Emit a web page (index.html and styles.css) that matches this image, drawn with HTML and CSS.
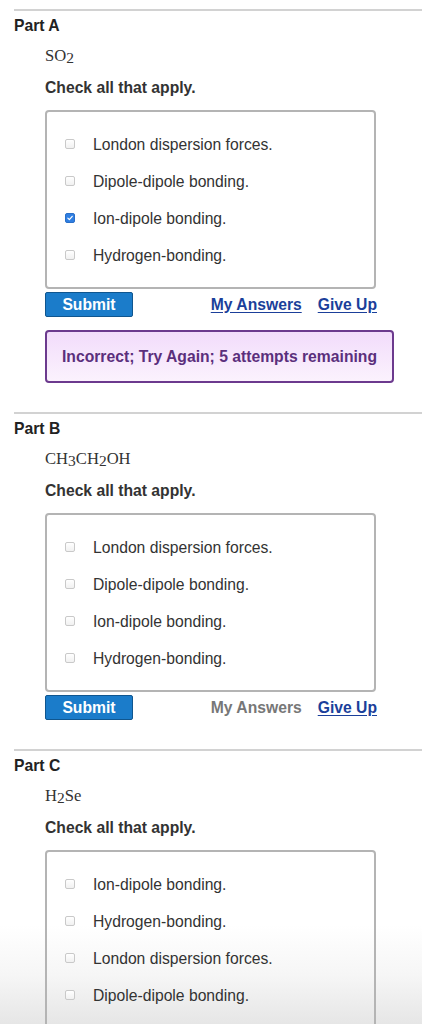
FILE: index.html
```html
<!DOCTYPE html>
<html>
<head>
<meta charset="utf-8">
<link rel="stylesheet" href="styles.css">
</head>
<body>
<div class="page">
  <section class="part">
    <h3 class="part-title">Part A</h3>
    <div class="formula">SO<span class="sub">2</span></div>
    <p class="instr">Check all that apply.</p>
    <div class="choices">
      <div class="choice"><span class="cb"></span><span>London dispersion forces.</span></div>
      <div class="choice"><span class="cb"></span><span>Dipole-dipole bonding.</span></div>
      <div class="choice"><span class="cb checked"><svg viewBox="0 0 10 10" width="10" height="10"><path d="M2.3 5.2 L4.2 7.1 L7.8 2.9" fill="none" stroke="#fff" stroke-width="1.5" stroke-linecap="round" stroke-linejoin="round"/></svg></span><span>Ion-dipole bonding.</span></div>
      <div class="choice"><span class="cb"></span><span>Hydrogen-bonding.</span></div>
    </div>
    <div class="actions">
      <button class="submit">Submit</button>
      <div class="links">
        <a class="link">My Answers</a>
        <a class="link">Give Up</a>
      </div>
    </div>
    <div class="feedback">Incorrect; Try Again; 5 attempts remaining</div>
  </section>

  <section class="part">
    <h3 class="part-title">Part B</h3>
    <div class="formula">CH<span class="sub">3</span>CH<span class="sub">2</span>OH</div>
    <p class="instr">Check all that apply.</p>
    <div class="choices">
      <div class="choice"><span class="cb"></span><span>London dispersion forces.</span></div>
      <div class="choice"><span class="cb"></span><span>Dipole-dipole bonding.</span></div>
      <div class="choice"><span class="cb"></span><span>Ion-dipole bonding.</span></div>
      <div class="choice"><span class="cb"></span><span>Hydrogen-bonding.</span></div>
    </div>
    <div class="actions">
      <button class="submit">Submit</button>
      <div class="links">
        <span class="link disabled">My Answers</span>
        <a class="link">Give Up</a>
      </div>
    </div>
  </section>

  <section class="part">
    <h3 class="part-title">Part C</h3>
    <div class="formula">H<span class="sub">2</span>Se</div>
    <p class="instr">Check all that apply.</p>
    <div class="choices">
      <div class="choice"><span class="cb"></span><span>Ion-dipole bonding.</span></div>
      <div class="choice"><span class="cb"></span><span>Hydrogen-bonding.</span></div>
      <div class="choice"><span class="cb"></span><span>London dispersion forces.</span></div>
      <div class="choice"><span class="cb"></span><span>Dipole-dipole bonding.</span></div>
    </div>
  </section>
</div>
</body>
</html>
```

FILE: styles.css
```css
html {
  margin: 0;
  padding: 0;
  background: #fff;
}
body {
  margin: 0;
  padding: 0;
  font-family: "Liberation Sans", Arial, sans-serif;
  color: #333;
  overflow: hidden;
  height: 1024px;
  background: linear-gradient(to bottom, #fff 0, #fff 925px, #f6f6f6 975px, #e6e6e6 1024px);
}
.page {
  padding: 9px 0 0 14px;
}
.part {
  border-top: 2px solid #d2d2d2;
  padding-top: 6px;
  padding-bottom: 29px;
}
.part-title {
  margin: 0;
  font-size: 15.7px;
  line-height: 18px;
  font-weight: bold;
  color: #222;
}
.formula {
  margin: 12px 0 0 31px;
  font-family: "Liberation Serif", "Times New Roman", serif;
  font-size: 16.6px;
  line-height: 18px;
  color: #333;
}
.sub {
  position: relative;
  top: 2px;
  font-size: 15.5px;
}
.instr {
  margin: 14px 0 0 31px;
  font-size: 15.7px;
  line-height: 18px;
  font-weight: bold;
  color: #333;
}
.choices {
  margin: 13px 0 0 31px;
  width: 327px;
  border: 2px solid #b4b4b4;
  border-radius: 4px;
  padding: 24px 0 22px 0;
  display: flex;
  flex-direction: column;
  gap: 19px;
}
.choice {
  display: flex;
  align-items: center;
  font-size: 15.7px;
  line-height: 18px;
  color: #333;
  padding-left: 18px;
}
.cb {
  width: 8px;
  height: 8px;
  border: 1px solid #c9c9c9;
  border-radius: 2px;
  background: linear-gradient(#fff, #f1f1f1);
  margin-right: 18px;
  margin-top: -3px;
  display: flex;
  align-items: center;
  justify-content: center;
  flex: none;
}
.cb.checked {
  background: #2f7fe2;
  border-color: #2a6fc8;
}
.cb svg {
  display: block;
}
.actions {
  margin: 3px 0 0 31px;
  width: 332px;
  display: flex;
  align-items: center;
  justify-content: space-between;
}
.submit {
  width: 88px;
  height: 25px;
  background: #1b7cca;
  border: 1px solid #10568f;
  border-radius: 2px;
  color: #fff;
  font-family: "Liberation Sans", Arial, sans-serif;
  font-size: 15.7px;
  font-weight: bold;
  padding: 0;
}
.links {
  display: flex;
  gap: 16px;
}
.link {
  font-size: 15.7px;
  font-weight: bold;
  color: #1b3f9a;
  text-decoration: underline;
  text-underline-offset: 2px;
}
.link.disabled {
  color: #777;
  text-decoration: none;
}
.feedback {
  margin: 13px 0 0 31px;
  width: 345px;
  height: 49px;
  border: 2px solid #6c3a8e;
  border-radius: 4px;
  background: linear-gradient(#f2dcfb, #fbf2fd);
  color: #5b2f7c;
  font-size: 15.7px;
  font-weight: bold;
  display: flex;
  align-items: center;
  justify-content: center;
}
```
